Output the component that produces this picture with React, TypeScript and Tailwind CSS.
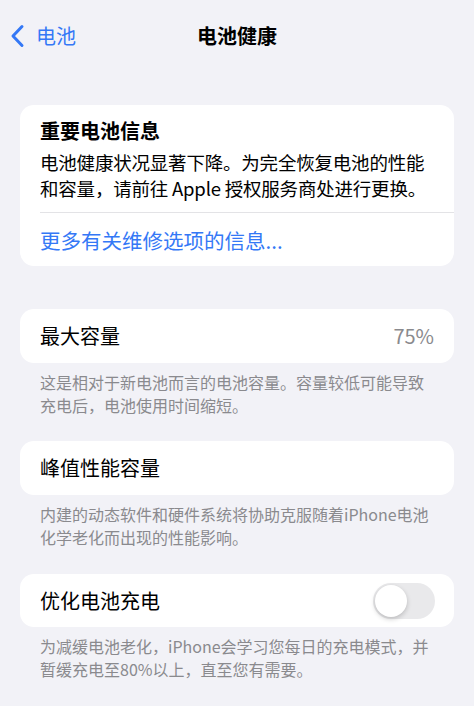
const font = { fontFamily: '"Noto Sans CJK SC", "Noto Sans", sans-serif' };

const Caption = ({ lines }: { lines: string[] }) => (
  <p className="px-10 pt-2 text-[16px] leading-[23px] text-[#8a8a8e] whitespace-nowrap">
    {lines.map((l, i) => (
      <span key={i} className="block">
        {l}
      </span>
    ))}
  </p>
);

export default function App() {
  return (
    <div className="w-[474px] h-[706px] overflow-hidden bg-[#f2f2f7] text-black" style={font}>
      {/* nav bar */}
      <div className="relative flex items-center h-[44px] mt-[14px]">
        <div className="flex items-center pl-[10px] text-[#3478f6]">
          <svg width="16" height="24" viewBox="0 0 16 24" fill="none">
            <path d="M12 2.5 3 12l9 9.5" stroke="currentColor" strokeWidth="3" strokeLinecap="round" strokeLinejoin="round" />
          </svg>
          <span className="ml-[10px] text-[20px] leading-none">电池</span>
        </div>
        <div className="absolute inset-0 flex items-center justify-center pointer-events-none">
          <span className="text-[20px] font-bold leading-none">电池健康</span>
        </div>
      </div>

      {/* important info */}
      <div className="mx-5 mt-[47px] rounded-[14px] bg-white pl-5 pt-[12px] pb-[13px]">
        <div className="text-[20px] font-bold leading-[28px]">重要电池信息</div>
        <p className="mt-1 pr-5 text-[18.5px] leading-[26px] tracking-[-0.2px]">
          电池健康状况显著下降。为完全恢复电池的性能和容量，请前往 Apple 授权服务商处进行更换。
        </p>
        <div className="mt-[11px] h-px bg-[#e3e3e6]" />
        <div className="mt-[14px] text-[20.5px] leading-[26px] text-[#3478f6]">更多有关维修选项的信息...</div>
      </div>

      {/* max capacity */}
      <div className="mx-5 mt-[43px] flex h-[54px] items-center justify-between rounded-[14px] bg-white px-5">
        <span className="text-[20px]">最大容量</span>
        <span className="text-[20px] text-[#8a8a8e]">75%</span>
      </div>
      <Caption lines={['这是相对于新电池而言的电池容量。容量较低可能导致', '充电后，电池使用时间缩短。']} />

      {/* peak performance */}
      <div className="mx-5 mt-[24px] flex h-[54px] items-center rounded-[14px] bg-white px-5">
        <span className="text-[20px]">峰值性能容量</span>
      </div>
      <Caption lines={['内建的动态软件和硬件系统将协助克服随着iPhone电池', '化学老化而出现的性能影响。']} />

      {/* optimized charging */}
      <div className="mx-5 mt-[25px] flex h-[53px] items-center justify-between rounded-[14px] bg-white pl-5 pr-[19px]">
        <span className="text-[20px]">优化电池充电</span>
        <div className="flex h-[36px] w-[62px] items-center rounded-full bg-[#e9e9eb] p-[2px]">
          <div className="h-[32px] w-[32px] rounded-full bg-white shadow-[0_2px_5px_rgba(0,0,0,0.2)]" />
        </div>
      </div>
      <Caption lines={['为减缓电池老化，iPhone会学习您每日的充电模式，并', '暂缓充电至80%以上，直至您有需要。']} />
    </div>
  );
}
